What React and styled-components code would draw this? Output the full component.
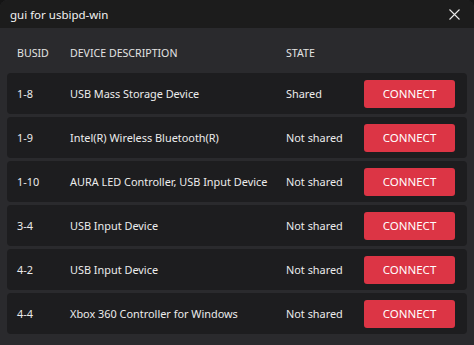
import styled, { createGlobalStyle } from "styled-components";

const GlobalStyle = createGlobalStyle`
  html, body {
    margin: 0;
    padding: 0;
    background: #151515;
  }
  body {
    font-family: "Noto Sans", "Open Sans", sans-serif;
  }
`;

const Window = styled.div`
  width: 474px;
  height: 345px;
  box-sizing: border-box;
  background: #2a2a2d;
  border-radius: 8px 8px 0 0;
  overflow: hidden;
  display: flex;
  flex-direction: column;
`;

const TitleBar = styled.div`
  height: 28px;
  background: #1c1c1c;
  display: flex;
  align-items: center;
  justify-content: space-between;
  padding: 0 14px 0 10px;
  color: #f2f2f2;
  font-size: 11.5px;
`;

const Close = styled.button`
  background: none;
  border: none;
  padding: 0;
  display: flex;
  color: #e6e6e6;
  cursor: pointer;
`;

const Body = styled.div`
  display: flex;
  flex-direction: column;
  gap: 3px;
  padding: 0 7px;
`;

const Grid = styled.div`
  display: grid;
  grid-template-columns: 53px 216px 78px 91px;
  align-items: center;
  box-sizing: border-box;
  padding: 0 12px 0 10px;
`;

const Header = styled(Grid)`
  height: 42px;
  padding-top: 8px;
  color: #e4e4e4;
  font-size: 10.6px;
`;

const Row = styled(Grid)`
  height: 41px;
  background: #1d1d1f;
  border-radius: 4px;
  color: #ececec;
  font-size: 10.9px;
`;

const Cell = styled.span`
  white-space: nowrap;
`;

const Button = styled.button`
  height: 28px;
  width: 91px;
  border: none;
  border-radius: 3px;
  background: #dc3545;
  color: #fff;
  font-family: inherit;
  font-size: 11.5px;
  cursor: pointer;
`;

const devices = [
  { id: "1-8", desc: "USB Mass Storage Device", state: "Shared" },
  { id: "1-9", desc: "Intel(R) Wireless Bluetooth(R)", state: "Not shared" },
  { id: "1-10", desc: "AURA LED Controller, USB Input Device", state: "Not shared" },
  { id: "3-4", desc: "USB Input Device", state: "Not shared" },
  { id: "4-2", desc: "USB Input Device", state: "Not shared" },
  { id: "4-4", desc: "Xbox 360 Controller for Windows", state: "Not shared" },
];

export default function App() {
  return (
    <>
      <GlobalStyle />
      <Window>
        <TitleBar>
          <span>gui for usbipd-win</span>
          <Close aria-label="close">
            <svg width="11" height="11" viewBox="0 0 11 11">
              <path d="M0.5 0.5 L10.5 10.5 M10.5 0.5 L0.5 10.5" stroke="currentColor" strokeWidth="1.1" />
            </svg>
          </Close>
        </TitleBar>
        <Body>
          <Header>
            <Cell>BUSID</Cell>
            <Cell>DEVICE DESCRIPTION</Cell>
            <Cell>STATE</Cell>
            <span />
          </Header>
          {devices.map((d) => (
            <Row key={d.id}>
              <Cell>{d.id}</Cell>
              <Cell>{d.desc}</Cell>
              <Cell>{d.state}</Cell>
              <Button>CONNECT</Button>
            </Row>
          ))}
        </Body>
      </Window>
    </>
  );
}
